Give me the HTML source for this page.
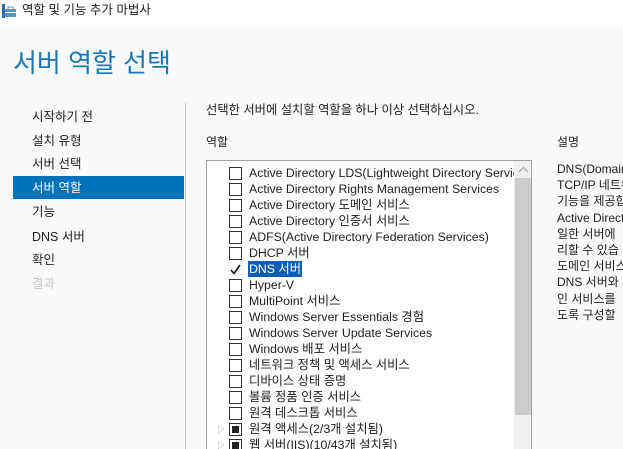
<!DOCTYPE html>
<html><head><meta charset="utf-8"><style>
*{margin:0;padding:0;box-sizing:border-box}
html,body{width:623px;height:449px;overflow:hidden}
body{background:#fafafa;font-family:"Liberation Sans","Noto Sans CJK KR",sans-serif;font-size:12px;color:#1e1e1e;position:relative}
.a{position:absolute;white-space:nowrap;line-height:16px}
.tb{position:absolute;left:0;top:0;width:623px;height:25px;background:#fff}
.nav{left:32px;font-size:12.5px}
.row{position:absolute;left:0;height:16px;width:307px}
.cb{position:absolute;left:22px;top:2px;width:13px;height:13px;border:1px solid #333;background:#fff}
.row span{position:absolute;left:42px;top:0;line-height:16px;white-space:nowrap;font-size:12.3px}
</style></head><body>
<div class="tb"></div>
<svg style="position:absolute;left:2px;top:4px" width="14" height="14" viewBox="0 0 14 14"><rect x="0" y="0" width="3" height="14" fill="#2a6bb8"/><rect x="3" y="5" width="11" height="8" fill="#5b8fd0"/><rect x="6" y="3" width="5" height="3" fill="none" stroke="#5b8fd0"/><rect x="3" y="8" width="11" height="1" fill="#fff"/></svg>
<div class="a" style="left:22px;top:2px;font-size:12.5px">역할 및 기능 추가 마법사</div>
<div class="a" style="left:13px;top:47px;font-size:26px;line-height:32px;color:#1a78b4">서버 역할 선택</div>
<div class="a nav" style="top:109px">시작하기 전</div>
<div class="a nav" style="top:133px">설치 유형</div>
<div class="a nav" style="top:156px">서버 선택</div>
<div style="position:absolute;left:13px;top:176px;width:171px;height:23px;background:#0072bc"></div>
<div class="a nav" style="top:180px;color:#fff">서버 역할</div>
<div class="a nav" style="top:204px">기능</div>
<div class="a nav" style="top:229px">DNS 서버</div>
<div class="a nav" style="top:252px">확인</div>
<div class="a nav" style="top:276px;color:#c8c8c8">결과</div>
<div style="position:absolute;left:185px;top:103px;width:1px;height:346px;background:#c8c8c8"></div>
<div class="a" style="left:206px;top:102px;font-size:12.3px">선택한 서버에 설치할 역할을 하나 이상 선택하십시오.</div>
<div class="a" style="left:206px;top:134px">역할</div>
<div class="a" style="left:557px;top:134px">설명</div>
<div style="position:absolute;left:206px;top:160px;width:326px;height:289px;border:1px solid #a0a0a0;border-bottom:none;background:#fff;overflow:hidden">
<div class="row" style="top:4px"><div class="cb"></div><span>Active Directory LDS(Lightweight Directory Servic</span></div>
<div class="row" style="top:20px"><div class="cb"></div><span>Active Directory Rights Management Services</span></div>
<div class="row" style="top:36px"><div class="cb"></div><span>Active Directory 도메인 서비스</span></div>
<div class="row" style="top:52px"><div class="cb"></div><span>Active Directory 인증서 서비스</span></div>
<div class="row" style="top:68px"><div class="cb"></div><span>ADFS(Active Directory Federation Services)</span></div>
<div class="row" style="top:84px"><div class="cb"></div><span>DHCP 서버</span></div>
<div class="row" style="top:100px"><svg style="position:absolute;left:22px;top:2px" width="13" height="13" viewBox="0 0 13 13"><path d="M2 7 L5 10.5 L11 2" fill="none" stroke="#111" stroke-width="1.6"/></svg><span style="background:#0a5fb4;color:#fff;padding:0 1px;left:41px">DNS 서버</span></div>
<div class="row" style="top:116px"><div class="cb"></div><span>Hyper-V</span></div>
<div class="row" style="top:132px"><div class="cb"></div><span>MultiPoint 서비스</span></div>
<div class="row" style="top:148px"><div class="cb"></div><span>Windows Server Essentials 경험</span></div>
<div class="row" style="top:164px"><div class="cb"></div><span>Windows Server Update Services</span></div>
<div class="row" style="top:180px"><div class="cb"></div><span>Windows 배포 서비스</span></div>
<div class="row" style="top:196px"><div class="cb"></div><span>네트워크 정책 및 액세스 서비스</span></div>
<div class="row" style="top:212px"><div class="cb"></div><span>디바이스 상태 증명</span></div>
<div class="row" style="top:228px"><div class="cb"></div><span>볼륨 정품 인증 서비스</span></div>
<div class="row" style="top:244px"><div class="cb"></div><span>원격 데스크톱 서비스</span></div>
<div class="row" style="top:260px"><div style="position:absolute;left:10px;top:3px;font-size:8px;color:#999">▷</div><div class="cb"><div style="margin:2px;width:7px;height:7px;background:#222"></div></div><span>원격 액세스(2/3개 설치됨)</span></div>
<div class="row" style="top:276px"><div style="position:absolute;left:10px;top:3px;font-size:8px;color:#999">▷</div><div class="cb"><div style="margin:2px;width:7px;height:7px;background:#222"></div></div><span>웹 서버(IIS)(10/43개 설치됨)</span></div>
<div style="position:absolute;left:307px;top:0;width:18px;height:289px;background:#f0f0f0"></div>
<div style="position:absolute;left:308px;top:17px;width:17px;height:237px;background:#cdcdcd"></div>
<svg style="position:absolute;left:311px;top:5px" width="11" height="7" viewBox="0 0 11 7"><path d="M1 6 L5.5 1.5 L10 6" fill="none" stroke="#999" stroke-width="1"/></svg>
</div>
<div class="a" style="left:557px;top:161px;line-height:16.2px">DNS(Domain<br>TCP/IP 네트워<br>기능을 제공합<br>Active Direct<br>일한 서버에<br>리할 수 있습<br>도메인 서비스<br>DNS 서버와<br>인 서비스를<br>도록 구성할</div>
</body></html>
